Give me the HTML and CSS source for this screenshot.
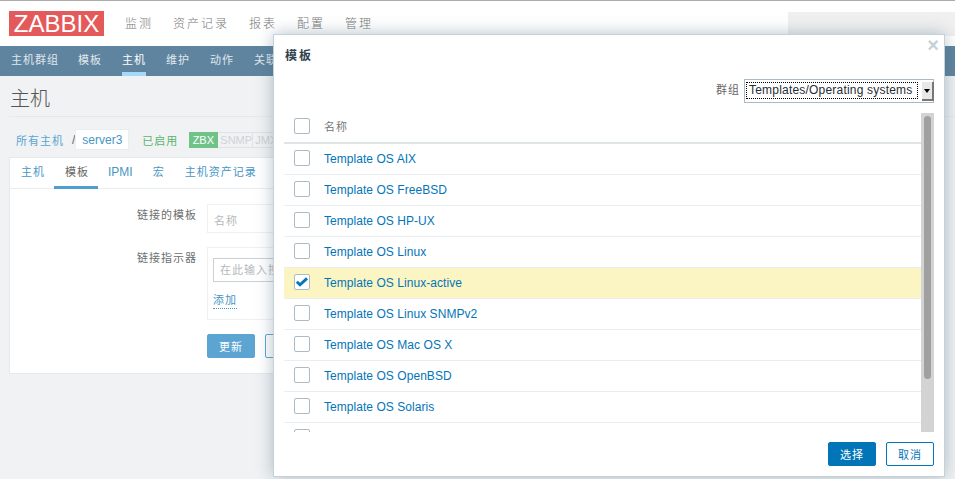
FILE: index.html
```html
<!DOCTYPE html>
<html lang="zh">
<head>
<meta charset="utf-8">
<title>主机</title>
<link rel="stylesheet" href="styles.css">
</head>
<body>
<header class="top">
  <div class="logo">ZABBIX</div>
  <nav class="menu"><a>监测</a><a>资产记录</a><a>报表</a><a>配置</a><a>管理</a></nav>
  <div class="search"></div>
</header>
<nav class="sub">
  <a class="first">主机群组</a><a>模板</a><a class="on">主机</a><a>维护</a><a>动作</a><a>关联项事件</a>
</nav>
<main class="page">
  <h1 class="title">主机</h1>
  <div class="crumbs">
    <a class="all">所有主机</a><span class="sep">/</span><a class="cur">server3</a>
    <span class="enabled">已启用</span>
    <span class="badge green">ZBX</span><span class="badge snmp">SNMP</span><span class="badge">JMX</span>
  </div>
  <section class="panel">
    <div class="tabs"><a>主机</a><a class="on">模板</a><a class="ipmi">IPMI</a><a>宏</a><a>主机资产记录</a></div>
    <div class="form">
      <label class="lbl">链接的模板</label>
      <div class="box linked"><span class="ph">名称</span></div>
      <label class="lbl second">链接指示器</label>
      <div class="box link">
        <div class="input">在此输入搜索</div>
        <a class="add">添加</a>
      </div>
      <div class="btns"><button class="b-primary">更新</button><button class="b-plain">克隆</button></div>
    </div>
  </section>
</main>

<div class="modal">
  <div class="m-head"><h2>模板</h2><span class="close">×</span></div>
  <div class="m-filter">
    <span class="f-label">群组</span>
    <div class="select"><span class="sel-text">Templates/Operating systems</span><span class="sel-btn"><i></i></span></div>
  </div>
  <div class="m-body">
    <div class="list">
      <div class="row head"><span class="cb"></span><span class="th">名称</span></div>
      <div class="row"><span class="cb"></span><a>Template OS AIX</a></div>
      <div class="row"><span class="cb"></span><a>Template OS FreeBSD</a></div>
      <div class="row"><span class="cb"></span><a>Template OS HP-UX</a></div>
      <div class="row"><span class="cb"></span><a>Template OS Linux</a></div>
      <div class="row sel"><span class="cb"><svg width="14" height="14" viewBox="0 0 14 14"><path d="M1.8 6.8 5 9.8 12 3.4" fill="none" stroke="#0275b8" stroke-width="2.8"/></svg></span><a>Template OS Linux-active</a></div>
      <div class="row"><span class="cb"></span><a>Template OS Linux SNMPv2</a></div>
      <div class="row"><span class="cb"></span><a>Template OS Mac OS X</a></div>
      <div class="row"><span class="cb"></span><a>Template OS OpenBSD</a></div>
      <div class="row"><span class="cb"></span><a>Template OS Solaris</a></div>
      <div class="row"><span class="cb"></span></div>
    </div>
    <div class="track"><div class="thumb"></div></div>
  </div>
  <div class="m-foot"><button class="pick">选择</button><button class="cancel">取消</button></div>
</div>
</body>
</html>
```
FILE: styles.css
```css
* { box-sizing: border-box; }
html, body { margin: 0; height: 479px; overflow: hidden; }
body {
  position: relative;
  background: #f0f2f4;
  font-family: "Liberation Sans", "Noto Sans CJK SC", sans-serif;
  font-size: 12px;
  color: #1f2c33;
}
a { text-decoration: none; }

.top {
  height: 46px;
  background: #fff;
  border-top: 1px solid #acacac;
  display: flex;
  padding: 10px 0 0 9px;
}
.logo {
  width: 95px;
  height: 25px;
  background: #e45959;
  color: #fff;
  font-size: 24px;
  line-height: 25px;
  text-align: center;
}
.menu { display: flex; gap: 20px; margin-left: 21px; padding-top: 3px; }
.menu a { font-size: 12px; letter-spacing: 2px; color: #777; font-weight: 300; }
.search { margin-left: auto; width: 167px; height: 24px; margin-top: 1px; background: #f0f0f0; }

.sub {
  height: 30px;
  background: #5f849f;
  display: flex;
  gap: 20px;
  padding-left: 11px;
  white-space: nowrap;
}
.sub a {
  color: #e0e8ee;
  font-size: 11px;
  letter-spacing: 1px;
  line-height: 29px;
  height: 30px;
}
.sub a.first { margin-right: -1px; }
.sub a.on { color: #fff; border-bottom: 4px solid #a6d8f7; }

.page { padding: 0 10px 0 9px; }
.title {
  margin: 0 -10px 0 0;
  height: 41px;
  font-size: 20px;
  font-weight: 300;
  line-height: 46px;
  color: #555;
  padding-left: 1px;
  border-bottom: 1px solid #e6e9ec;
}
.crumbs {
  height: 40px;
  display: flex;
  align-items: center;
  padding: 5px 0 0 7px;
}
.all { color: #5aa4d2; letter-spacing: 1px; font-size: 11px; width: 47px; white-space: nowrap; }
.sep { color: #666; margin-left: 9px; }
.cur {
  background: #fff;
  border: 1px solid #ebeef0;
  color: #4796c4;
  height: 21px;
  width: 54px;
  line-height: 20px;
  text-align: center;
}
.enabled { color: #5bb56e; font-size: 11px; letter-spacing: 1px; margin-left: 13px; width: 47px; white-space: nowrap; }
.badge {
  height: 16px;
  line-height: 15px;
  font-size: 11px;
  color: #cfd3d6;
  padding: 0 2px;
  border: 1px solid #dfe3e6;
  border-left: 0;
  text-align: center;
}
.badge.green { background: #6fc387; color: #fff; border-color: #6fc387; width: 29px; }
.badge.snmp { width: 35px; }

.panel {
  background: #fff;
  border: 1px solid #e6e9ec;
  height: 217px;
}
.tabs {
  display: flex;
  height: 31px;
  border-bottom: 1px solid #ebeef0;
}
.tabs a {
  color: #4796c4;
  padding: 0 9px 0 11px;
  line-height: 29px;
  letter-spacing: 1px;
  font-size: 11px;
  white-space: nowrap;
  height: 31px;
}
.tabs a.ipmi { font-size: 12px; letter-spacing: 0; margin-left: -1px; }
.tabs a.on { color: #666; border-bottom: 3px solid #4f9fd1; }

.form {
  display: grid;
  grid-template-columns: 187px 1fr;
  column-gap: 10px;
  padding-top: 15px;
}
.lbl { text-align: right; color: #6e6e6e; font-size: 11px; letter-spacing: 1px; line-height: 22px; }
.second { margin-top: 14px; }
.box { background: #fff; border: 1px solid #eef0f2; }
.linked { height: 29px; padding: 7px 6px; }
.ph { color: #b5b9bc; font-size: 11px; letter-spacing: 1px; }
.link { height: 73px; margin-top: 14px; padding: 10px 5px; }
.input {
  width: 200px;
  height: 24px;
  border: 1px solid #c9d1d6;
  color: #b5b9bc;
  font-size: 11px;
  letter-spacing: 1px;
  line-height: 22px;
  padding-left: 6px;
}
.add {
  display: inline-block;
  margin-top: 11px;
  color: #4796c4;
  font-size: 11px;
  letter-spacing: 1px;
  border-bottom: 1px dotted #4796c4;
  line-height: 15px;
}
.btns { grid-column: 2; display: flex; gap: 10px; margin-top: 14px; }
.btns button { width: 48px; height: 24px; border-radius: 2px; font: 11px "Liberation Sans", "Noto Sans CJK SC", sans-serif; letter-spacing: 1px; }
.b-primary { background: #5ca5d2; border: 1px solid #5ca5d2; color: #fff; }
.b-plain { background: #fff; border: 1px solid #5ca5d2; color: #5ca5d2; }

.modal {
  position: absolute;
  left: 273px;
  top: 34px;
  width: 672px;
  height: 443px;
  background: #fff;
  border: 1px solid #c5d1d9;
  box-shadow: 0 0 16px rgba(70, 100, 120, .4);
  display: flex;
  flex-direction: column;
  padding: 0 10px;
}
.m-head { height: 44px; display: flex; justify-content: space-between; padding: 13px 0 0 1px; position: relative; }
.m-head h2 { margin: 0; font-size: 12px; letter-spacing: 2px; font-weight: 700; color: #30404c; line-height: 16px; }
.close { position: absolute; right: -5px; top: 0; color: #c5d1d9; font-size: 20px; line-height: 20px; font-weight: 700; }
.m-filter { height: 34px; display: flex; justify-content: flex-end; gap: 4px; align-items: flex-start; }
.f-label { color: #666; font-size: 11px; letter-spacing: 1px; line-height: 23px; }
.select {
  width: 190px;
  height: 24px;
  border: 1px solid #a8bac5;
  display: flex;
  padding: 2px 0 3px 1px;
  background: #fff;
}
.sel-text {
  flex: none;
  width: 172px;
  border: 1px dotted #000;
  font-size: 12px;
  line-height: 15px;
  padding-left: 2px;
  letter-spacing: .2px;
  white-space: nowrap;
  overflow: hidden;
  color: #1f2c33;
}
.sel-btn {
  flex: none;
  width: 12px;
  margin: 0 0 -2px 4px;
  background: #e8e8e8;
  border-right: 2px solid #777;
  border-bottom: 2px solid #777;
  display: flex;
  align-items: center;
  justify-content: center;
}
.sel-btn i { width: 0; height: 0; border: 3.5px solid transparent; border-top: 4px solid #000; border-bottom: 0; }

.m-body { display: flex; height: 320px; }
.list { flex: 1; overflow: hidden; height: 319px; }
.row {
  height: 31px;
  display: flex;
  align-items: center;
  border-bottom: 1px solid #ebeef0;
  padding-left: 10px;
}
.row a { color: #0275b8; font-size: 12px; letter-spacing: .05px; }
.row.sel { background: #fbf5c4; }
.row.head { border-bottom: 2px solid #dfe4e7; padding-bottom: 1px; }
.th { color: #777; font-size: 11px; letter-spacing: 1px; margin-bottom: 2px; }
.cb {
  width: 16px;
  height: 16px;
  flex: none;
  margin: 0 14px 2px 0;
  background: #fff;
  border: 1px solid #acbbc4;
  border-radius: 2px;
  display: flex;
  align-items: center;
  justify-content: center;
}
.track { width: 13px; height: 319px; background: #d3d3d3; padding: 3px 3px 0; }
.thumb { height: 263px; background: #a0a0a0; border-radius: 4px; }
.m-foot { display: flex; justify-content: flex-end; gap: 10px; padding-top: 9px; }
.m-foot button { width: 48px; height: 24px; border-radius: 2px; font: 11px "Liberation Sans", "Noto Sans CJK SC", sans-serif; letter-spacing: 1px; }
.pick { background: #0275b8; border: 1px solid #0275b8; color: #fff; }
.cancel { background: #fff; border: 1px solid #0275b8; color: #0275b8; }
```
